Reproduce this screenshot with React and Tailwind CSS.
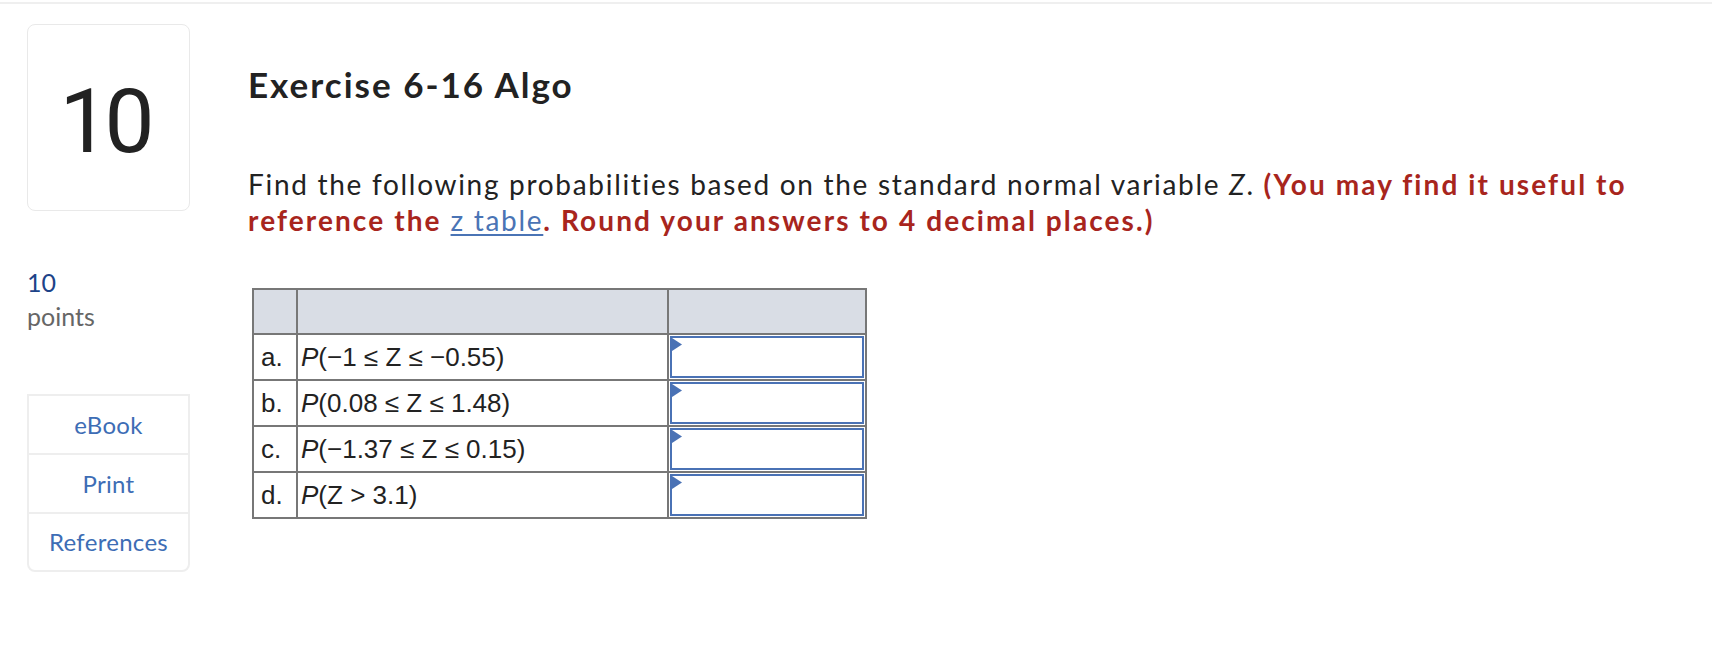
import React from 'react';

const rows = [
  { label: 'a.', text: ['(−1 ≤ ', 'Z', ' ≤ −0.55)'] },
  { label: 'b.', text: ['(0.08 ≤ ', 'Z', ' ≤ 1.48)'] },
  { label: 'c.', text: ['(−1.37 ≤ ', 'Z', ' ≤ 0.15)'] },
  { label: 'd.', text: ['(', 'Z', ' > 3.1)'] },
];

const AnswerBox = () => (
  <div className="relative h-[42px] border-2 border-[#4a72b5] bg-white">
    {/* little marker in the corner */}
    <svg className="absolute left-0 top-0" width="10" height="13" viewBox="0 0 10 13">
      <polygon points="0,0 10,6.5 0,13" fill="#4a72b5" />
    </svg>
  </div>
);

const Sidebar = () => (
  <aside className="w-[163px] shrink-0">
    <div className="flex h-[187px] items-center justify-center rounded-lg border border-[#e9e9e9]">
      <span className="mr-[8px] pt-[8px] font-['Roboto',sans-serif] text-[89px] leading-none tracking-[-5px] text-[#222]">
        10
      </span>
    </div>

    <div className="mt-[55px]">
      <div className="text-[25px] leading-[32px] text-[#1d4388]">10</div>
      <div className="mt-[2px] text-[25px] leading-[32px] text-[#666]">points</div>
    </div>

    <div className="mt-[62px] rounded-b-lg border-2 border-[#eeeeee] text-center text-[24px] tracking-[0.3px] text-[#3d6db5]">
      <div className="flex h-[59px] items-center justify-center border-b-2 border-[#eeeeee]">eBook</div>
      <div className="flex h-[59px] items-center justify-center border-b-2 border-[#eeeeee]">Print</div>
      <div className="flex h-[56px] items-center justify-center">References</div>
    </div>
  </aside>
);

const App = () => {
  return (
    <div className="min-h-[654px] w-full bg-white font-['Lato',sans-serif]">
      <div className="mt-[2px] h-[2px] bg-[#efefef]" />

      <div className="flex pl-[27px] pt-[20px]">
        <Sidebar />

        <main className="ml-[58px] w-[1420px]">
          <h1 className="mt-[40px] text-[35px] font-bold leading-[40px] tracking-[2px] text-[#222]">
            Exercise 6-16 Algo
          </h1>

          <p className="mt-[62px] text-[28px] leading-[36px] tracking-[1.7px] text-[#222]">
            Find the following probabilities based on the standard normal variable <i>Z</i>.{' '}
            <b className="tracking-[2.1px] text-[#a8251d]">(You may find it useful to</b>
            <br />
            <b className="tracking-[2.1px] text-[#a8251d]">reference the </b>
            <a href="#" className="text-[#4a74b5] underline decoration-2 underline-offset-[3px]">z table</a>
            <b className="tracking-[2.1px] text-[#a8251d]">. Round your answers to 4 decimal places.)</b>
          </p>

          <table className="ml-[4px] mt-[50px] w-[615px] border-collapse border-2 border-[#777] font-['Liberation_Sans',Arial,sans-serif] text-[26px] text-[#222]">
            <thead>
              <tr className="h-[45px] bg-[#d9dde5]">
                <th className="w-[44px] border-2 border-[#777]" />
                <th className="w-[371px] border-2 border-[#777]" />
                <th className="border-2 border-[#777]" />
              </tr>
            </thead>
            <tbody>
              {rows.map((r) => (
                <tr key={r.label} className="h-[46px]">
                  <td className="border-2 border-[#777] pl-[7px] text-left">{r.label}</td>
                  <td className="border-2 border-[#777] pl-[3px] text-left">
                    <i>P</i>
                    {r.text[0]}
                    {r.text[1]}
                    {r.text[2]}
                  </td>
                  <td className="border-2 border-[#777] p-[1px]">
                    <AnswerBox />
                  </td>
                </tr>
              ))}
            </tbody>
          </table>
        </main>
      </div>
    </div>
  );
};

export default App;
